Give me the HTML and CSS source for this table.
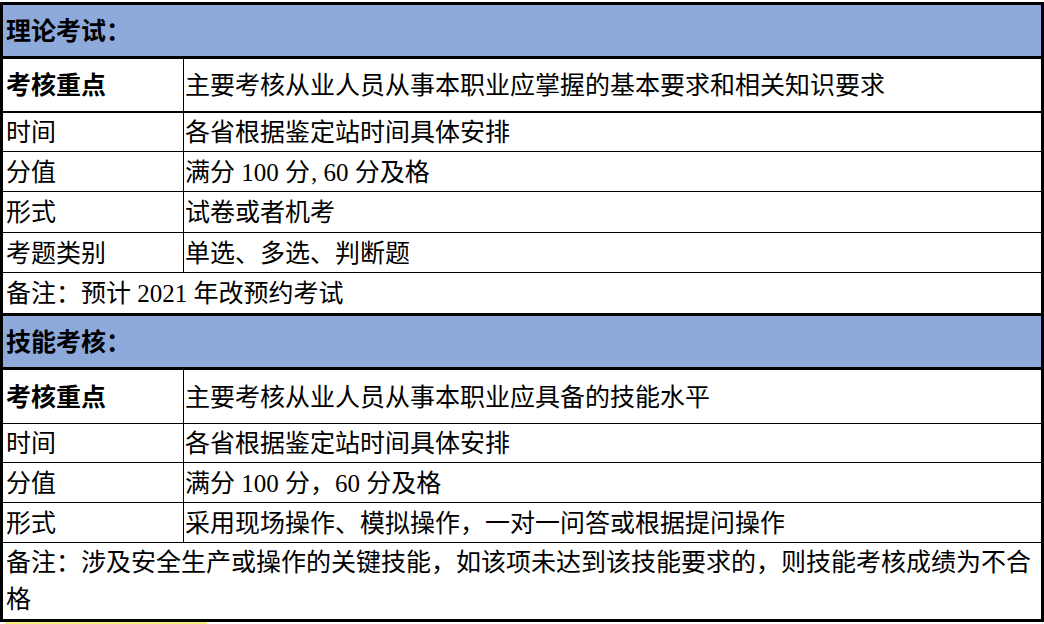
FILE: index.html
```html
<!DOCTYPE html>
<html lang="zh-CN">
<head>
<meta charset="utf-8">
<title>考试说明</title>
<link rel="stylesheet" href="styles.css">
</head>
<body>
<div class="sheet">
  <div class="row sec h54"><div class="cell span">理论考试：</div></div>
  <div class="row key h54 b2"><div class="cell label bold">考核重点</div><div class="cell val">主要考核从业人员从事本职业应掌握的基本要求和相关知识要求</div></div>
  <div class="row h39"><div class="cell label">时间</div><div class="cell val">各省根据鉴定站时间具体安排</div></div>
  <div class="row h40"><div class="cell label">分值</div><div class="cell val">满分 100 分<span class="hw">,</span>60 分及格</div></div>
  <div class="row h41"><div class="cell label">形式</div><div class="cell val">试卷或者机考</div></div>
  <div class="row h40"><div class="cell label">考题类别</div><div class="cell val">单选、多选、判断题</div></div>
  <div class="row h43 b3"><div class="cell span">备注：预计 2021 年改预约考试</div></div>
  <div class="row sec h54"><div class="cell span">技能考核：</div></div>
  <div class="row key h54"><div class="cell label bold">考核重点</div><div class="cell val">主要考核从业人员从事本职业应具备的技能水平</div></div>
  <div class="row h39"><div class="cell label">时间</div><div class="cell val">各省根据鉴定站时间具体安排</div></div>
  <div class="row h40"><div class="cell label">分值</div><div class="cell val">满分 100 分，60 分及格</div></div>
  <div class="row h40"><div class="cell label">形式</div><div class="cell val">采用现场操作、模拟操作，一对一问答或根据提问操作</div></div>
  <div class="row last"><div class="cell span note">备注：涉及安全生产或操作的关键技能，如该项未达到该技能要求的，则技能考核成绩为不合格</div></div>
</div>
<div class="mark"></div>
</body>
</html>
```
FILE: styles.css
```css
html, body {
  margin: 0;
  padding: 0;
  background: #ffffff;
}
body {
  font-family: "Liberation Serif", "Noto Sans CJK SC", serif;
  font-size: 25px;
  color: #000000;
  overflow: hidden;
}
.sheet {
  margin-top: 2px;
  width: 1044px;
  box-sizing: border-box;
  border: 3px solid #000000;
}
.row {
  display: grid;
  grid-template-columns: 181px 1fr;
  box-sizing: border-box;
  border-bottom: 1px solid #000000;
}
.h39 { height: 39px; }
.h40 { height: 40px; }
.h41 { height: 41px; }
.h43 { height: 43px; }
.h54 { height: 54px; }
.b2 { border-bottom-width: 2px; }
.b3 { border-bottom-width: 3px; }
.sec {
  background: #8eaadb;
  border-bottom-width: 3px;
  font-weight: bold;
}
.row.last {
  height: 76px;
  border-bottom: none;
}
.cell {
  display: flex;
  align-items: center;
  white-space: pre;
  line-height: 30px;
}
.label {
  padding-left: 3px;
  border-right: 1px solid #000000;
  padding-top: 2px;
}
.val {
  padding-left: 1px;
  padding-top: 2px;
}
.span {
  grid-column: 1 / 3;
  padding-left: 3px;
  padding-top: 2px;
}
.bold { font-weight: bold; }
.hw {
  display: inline-block;
  width: 12.5px;
  padding-left: 1px;
}
.note {
  white-space: normal;
  line-height: 37px;
  padding-top: 0;
  padding-right: 2px;
}
.mark {
  margin-left: 5px;
  width: 202px;
  height: 2px;
  background: #f4f07a;
}
```
